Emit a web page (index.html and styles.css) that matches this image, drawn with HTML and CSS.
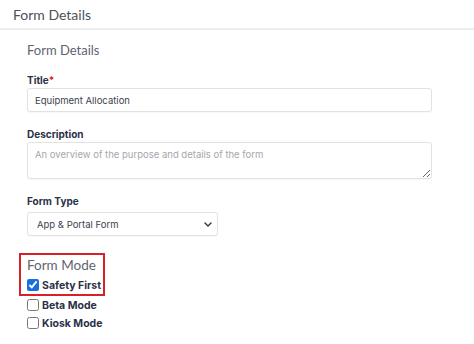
FILE: index.html
```html
<!DOCTYPE html>
<html lang="en">

<head>
    <meta charset="UTF-8">
    <meta name="viewport" content="width=device-width, initial-scale=1.0">
    <title>Form Details</title>
    <link rel="stylesheet" href="styles.css">
</head>

<body>
    <div class="page-titulo">Form Details</div>

    <div class="contenido">
        <h2 class="seccion-titulo">Form Details</h2>

        <div class="campo">
            <label class="campo-label" for="titulo">Title<span class="requerido">*</span></label>
            <input class="campo-input" type="text" id="titulo" value="Equipment Allocation">
        </div>

        <div class="campo">
            <label class="campo-label" for="descripcion">Description</label>
            <textarea class="campo-input campo-texto" id="descripcion" placeholder="An overview of the purpose and details of the form"></textarea>
        </div>

        <div class="campo">
            <label class="campo-label" for="tipo">Form Type</label>
            <div class="select-caja">
                <select class="campo-input campo-select" id="tipo">
                    <option>App &amp; Portal Form</option>
                </select>
                <svg class="select-flecha" width="8" height="5" viewBox="0 0 8 5">
                    <path d="M1 1l3 3 3-3" fill="none" stroke="#333" stroke-width="1.4" stroke-linecap="round" stroke-linejoin="round"/>
                </svg>
            </div>
        </div>

        <div class="modo-caja">
            <div class="modo-titulo">Form Mode</div>
            <label class="modo-opcion"><input type="checkbox" checked> Safety First</label>
        </div>
        <label class="modo-opcion"><input type="checkbox"> Beta Mode</label>
        <label class="modo-opcion"><input type="checkbox"> Kiosk Mode</label>
    </div>
</body>

</html>
```

FILE: styles.css
```css
* {
    margin: 0;
    padding: 0;
    box-sizing: border-box;
}

body {
    background-color: #fff;
    font-family: Inter, "Liberation Sans", sans-serif;
    width: 474px;
    height: 344px;
    overflow: hidden;
}

.page-titulo {
    height: 30px;
    padding: 5px 13px 0;
    font-family: Lato, sans-serif;
    font-size: 14px;
    line-height: 19px;
    color: #4d515c;
    border-bottom: 2px solid #ededed;
}

.contenido {
    padding: 10px 42px 0 27px;
}

.seccion-titulo {
    font-family: Lato, sans-serif;
    font-weight: normal;
    font-size: 13px;
    line-height: 20px;
    color: #5f6470;
}

.campo {
    margin-top: 13px;
}

.campo + .campo {
    margin-top: 15px;
}

.campo-label {
    display: block;
    font-size: 10px;
    font-weight: bold;
    line-height: 14px;
    color: #2a3147;
    margin-bottom: 1px;
}

.requerido {
    color: #d8202b;
}

.campo-input {
    display: block;
    width: 100%;
    height: 24px;
    padding: 0 7px;
    border: 1px solid #e2e2e2;
    border-radius: 3px;
    font-family: Inter, sans-serif;
    font-size: 9.5px;
    color: #3c4150;
    background: #fff;
    box-shadow: 0 1px 1px rgba(0, 0, 0, 0.03);
}

.campo-texto {
    height: 37px;
    padding: 6px 7px;
    resize: vertical;
}

.campo-texto::placeholder {
    color: #a4a7ad;
}

.select-caja {
    position: relative;
    width: 191px;
    margin-top: 4px;
}

.campo-select {
    appearance: none;
    padding: 0 9px;
}

.select-flecha {
    position: absolute;
    right: 6px;
    top: 10px;
}

.modo-caja {
    display: inline-block;
    margin: 17px 0 0 -8px;
    padding: 0 2px 0 6px;
    border: 2px solid #d8202b;
}

.modo-titulo {
    font-family: Lato, sans-serif;
    font-size: 13.5px;
    line-height: 21px;
    color: #5f6470;
}

.modo-opcion {
    display: flex;
    align-items: center;
    gap: 3px;
    height: 18px;
    font-size: 10.5px;
    font-weight: bold;
    color: #2a3147;
}

.modo-opcion input {
    width: 12px;
    height: 12px;
    accent-color: #1a6fe0;
}
```
